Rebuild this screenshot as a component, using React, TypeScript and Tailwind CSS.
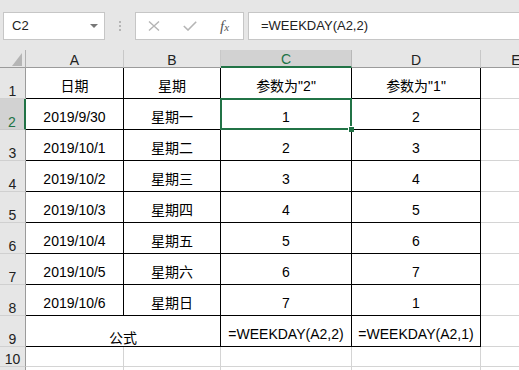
import React from 'react';

const FONT = "font-['Liberation_Sans','Noto_Sans_CJK_SC',sans-serif]";

// column widths (border included)
const COLS = [
  { key: 'A', w: 'w-[98px]' },
  { key: 'B', w: 'w-[97px]' },
  { key: 'C', w: 'w-[131px]' },
  { key: 'D', w: 'w-[129px]' },
];

const ROWS = [
  ['日期', '星期', '参数为"2"', '参数为"1"'],
  ['2019/9/30', '星期一', '1', '2'],
  ['2019/10/1', '星期二', '2', '3'],
  ['2019/10/2', '星期三', '3', '4'],
  ['2019/10/3', '星期四', '4', '5'],
  ['2019/10/4', '星期五', '5', '6'],
  ['2019/10/5', '星期六', '6', '7'],
  ['2019/10/6', '星期日', '7', '1'],
];

const RowHeader = ({ n, active }: { n?: number; active?: boolean }) => (
  <div
    className={
      active
        ? 'w-[26px] shrink-0 flex items-end justify-center bg-[#d2d2d2] border-b border-[#c8c8c8] border-r-2 border-r-[#217346] text-[#217346] text-[14px] leading-[13px]'
        : 'w-[26px] shrink-0 flex items-end justify-center bg-[#e6e6e6] border-b border-[#d0d0d0] border-r border-r-[#9b9b9b] text-[#222] text-[14px] leading-[13px]'
    }
  >
    {n}
  </div>
);

const EmptyE = () => <div className="w-[70px] shrink-0 border-r border-b border-[#d4d4d4]" />;

export default function App() {
  return (
    <div className={`w-full h-[370px] overflow-hidden bg-white text-black ${FONT}`}>
      {/* formula bar */}
      <div className="h-[50px] bg-[#e6e6e6] flex items-start pt-[12px]">
        <div className="ml-[3px] w-[102px] h-[28px] shrink-0 bg-white border border-[#c6c6c6] flex items-center pl-[8px] pr-[6px] text-[13px] text-[#222]">
          <span className="flex-1">C2</span>
          <span className="w-0 h-0 border-l-[4px] border-r-[4px] border-t-[4px] border-l-transparent border-r-transparent border-t-[#777]" />
        </div>
        <div className="w-[30px] h-[28px] shrink-0 flex flex-col items-center justify-center gap-[2px]">
          <span className="w-[2px] h-[2px] bg-[#b5b5b5]" />
          <span className="w-[2px] h-[2px] bg-[#b5b5b5]" />
          <span className="w-[2px] h-[2px] bg-[#b5b5b5]" />
        </div>
        <div className="w-[109px] h-[28px] shrink-0 bg-white border border-[#c6c6c6] flex items-center">
          <svg width="12" height="10" viewBox="0 0 12 10" className="ml-[12px]">
            <path d="M1 0.5 L11 9.5 M11 0.5 L1 9.5" stroke="#b5b5b5" strokeWidth="1.4" fill="none" />
          </svg>
          <svg width="14" height="10" viewBox="0 0 14 10" className="ml-[23px]">
            <path d="M0.8 5 L5 9 L13.2 0.8" stroke="#b5b5b5" strokeWidth="1.6" fill="none" />
          </svg>
          <span className="ml-[23px] font-['Liberation_Serif',serif] italic text-[#555] text-[15px] leading-none">
            f<span className="text-[11px]">x</span>
          </span>
        </div>
        <div className="ml-[4px] flex-1 h-[28px] bg-white border border-r-0 border-[#c6c6c6] flex items-center pl-[12px] text-[13px] text-[#222]">
          =WEEKDAY(A2,2)
        </div>
      </div>

      {/* column headers */}
      <div className="flex h-[18px] bg-[#e6e6e6]">
        <div className="w-[26px] shrink-0 border-r border-b border-[#9b9b9b] border-r-[#b0b0b0] flex items-end justify-end pr-[3px] pb-[1px]">
          <svg width="10" height="13" viewBox="0 0 10 13">
            <polygon points="10,0 10,13 0,13" fill="#b5b5b5" />
          </svg>
        </div>
        {COLS.map((c) =>
          c.key === 'C' ? (
            <div
              key={c.key}
              className={`${c.w} shrink-0 bg-[#d2d2d2] border-r border-[#b8b8b8] border-b-2 border-b-[#217346] flex items-end justify-center text-[14px] leading-[13px] text-[#217346]`}
            >
              {c.key}
            </div>
          ) : (
            <div
              key={c.key}
              className={`${c.w} shrink-0 border-r border-[#c8c8c8] border-b border-b-[#9b9b9b] flex items-end justify-center text-[14px] leading-[13px] text-[#222]`}
            >
              {c.key}
            </div>
          )
        )}
        <div className="w-[70px] shrink-0 border-b border-[#9b9b9b] flex items-end justify-center text-[14px] leading-[13px] text-[#222]">
          E
        </div>
      </div>

      {/* data rows */}
      {ROWS.map((r, i) => (
        <div key={i} className="flex h-[31px]">
          <RowHeader n={i + 1} active={i === 1} />
          {r.map((v, j) => (
            <div
              key={j}
              className={`${COLS[j].w} shrink-0 relative flex items-end justify-center pb-[4px] text-[14px] leading-[16px] border-r border-b border-black`}
            >
              {v}
              {i === 1 && j === 2 && (
                <>
                  <span className="absolute left-[-1px] top-[-1px] right-[-1px] bottom-[-1px] border-2 border-[#217346] z-10" />
                  <span className="absolute right-[-3px] bottom-[-3px] w-[6px] h-[6px] bg-[#217346] border-l border-t border-white z-20" />
                </>
              )}
            </div>
          ))}
          <EmptyE />
        </div>
      ))}

      {/* row 9 */}
      <div className="flex h-[31px]">
        <RowHeader n={9} />
        <div className="w-[195px] shrink-0 flex items-end justify-center text-[14px] leading-[16px] border-r border-b border-black">
          公式
        </div>
        <div className="w-[131px] shrink-0 flex items-end justify-center pb-[4px] text-[14px] leading-[16px] border-r border-b border-black">
          =WEEKDAY(A2,2)
        </div>
        <div className="w-[129px] shrink-0 flex items-end justify-center pb-[4px] text-[14px] leading-[16px] border-r border-b border-black">
          =WEEKDAY(A2,1)
        </div>
        <EmptyE />
      </div>

      {/* row 10 and the top of row 11 */}
      <div className="flex h-[20px]">
        <RowHeader n={10} />
        {COLS.map((c) => (
          <div key={c.key} className={`${c.w} shrink-0 border-r border-b border-[#d4d4d4]`} />
        ))}
        <EmptyE />
      </div>
      <div className="flex h-[20px]">
        <RowHeader />
        {COLS.map((c) => (
          <div key={c.key} className={`${c.w} shrink-0 border-r border-b border-[#d4d4d4]`} />
        ))}
        <EmptyE />
      </div>
    </div>
  );
}
